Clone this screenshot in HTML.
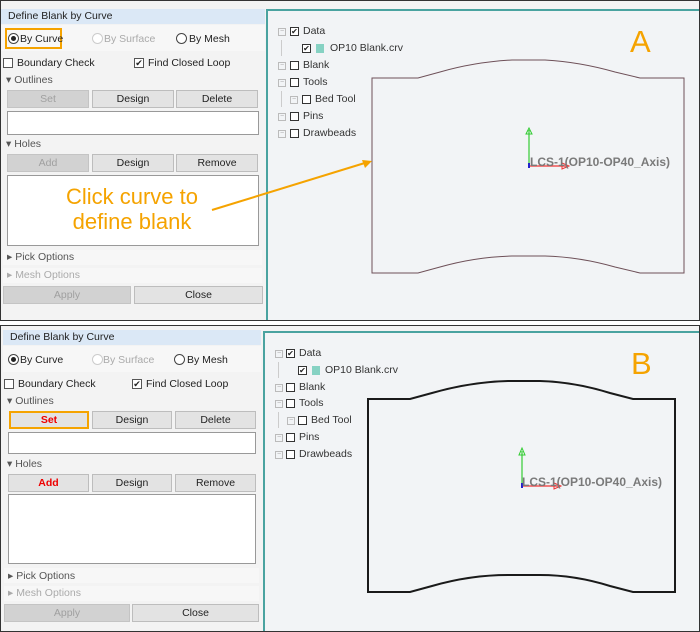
<!DOCTYPE html>
<html><head><style>
*{margin:0;padding:0;box-sizing:border-box}
body{width:700px;height:632px;background:#fff;position:relative;overflow:hidden;font-family:"Liberation Sans",sans-serif;font-size:10.5px;color:#222}
.a{position:absolute}
.panel{position:absolute;background:#f3f3f3;border:1px solid #333}
.hdr{position:absolute;background:#dbe8f6;font-size:10.5px;padding-left:7px;line-height:14px}
.btn{position:absolute;height:18px;background:#e3e3e3;border:1px solid #bdbdbd;text-align:center;line-height:16px;font-size:10.5px}
.dis{background:#d2d2d2;color:#a0a0a0;border-color:#c4c4c4}
.box{position:absolute;background:#fff;border:1px solid #999}
.rad{position:absolute;width:11px;height:11px;border:1px solid #444;border-radius:50%;background:#fff}
.chk{position:absolute;width:10px;height:10px;border:1px solid #555;background:#fff;font-size:9px;line-height:8px;text-align:center}
.sec{position:absolute;background:#f7f7f7}
.vp{position:absolute;background:#f2f4f6;border-left:2px solid #4aa3a0;border-top:2px solid #4aa3a0}
.tr{position:absolute;font-size:10.5px;color:#333}
.ex{position:absolute;width:8px;height:8px;border:1px solid #bbb;font-size:7px;line-height:6px;text-align:center;color:#aaa}
.tc{position:absolute;width:9px;height:9px;border:1px solid #333;background:#fff;font-size:8px;line-height:7px;text-align:center}
.lcs{position:absolute;font-size:12px;font-weight:bold;color:#7a7a7a;z-index:3}
</style></head><body>

<!-- TOP PANEL -->
<div class="panel" style="left:0;top:0;width:700px;height:321px"></div>
<div class="hdr" style="left:1px;top:9px;width:264px;height:15px">Define Blank by Curve</div>
<div class="sec" style="left:1px;top:25px;width:264px;height:26px"></div>
<div class="a" style="left:5px;top:28px;width:57px;height:21px;border:2px solid #f5a300"></div>
<div class="rad" style="left:8px;top:33px"></div><div class="a" style="left:11px;top:36px;width:5px;height:5px;border-radius:50%;background:#222"></div>
<div class="a" style="left:20px;top:33px">By Curve</div>
<div class="rad" style="left:92px;top:33px;border-color:#ccc"></div><div class="a" style="left:104px;top:33px;color:#aaa">By Surface</div>
<div class="rad" style="left:176px;top:33px"></div><div class="a" style="left:189px;top:33px">By Mesh</div>
<div class="chk" style="left:3px;top:58px"></div><div class="a" style="left:17px;top:57px">Boundary Check</div>
<div class="chk" style="left:134px;top:58px">✔</div><div class="a" style="left:148px;top:57px">Find Closed Loop</div>
<div class="a" style="left:6px;top:74px;color:#555">▾ Outlines</div>
<div class="btn dis" style="left:7px;top:90px;width:82px">Set</div>
<div class="btn" style="left:92px;top:90px;width:82px">Design</div>
<div class="btn" style="left:176px;top:90px;width:82px">Delete</div>
<div class="box" style="left:7px;top:111px;width:252px;height:24px"></div>
<div class="a" style="left:6px;top:138px;color:#555">▾ Holes</div>
<div class="btn dis" style="left:7px;top:154px;width:82px">Add</div>
<div class="btn" style="left:92px;top:154px;width:82px">Design</div>
<div class="btn" style="left:176px;top:154px;width:82px">Remove</div>
<div class="box" style="left:7px;top:175px;width:252px;height:71px"></div>
<div class="a" style="left:22px;top:184px;width:220px;text-align:center;color:#f5a300;font-size:22px;line-height:25px">Click curve to<br>define blank</div>
<div class="sec" style="left:3px;top:250px;width:259px;height:15px"></div>
<div class="a" style="left:7px;top:251px;color:#555">▸ Pick Options</div>
<div class="sec" style="left:3px;top:268px;width:259px;height:15px"></div>
<div class="a" style="left:7px;top:269px;color:#aaa">▸ Mesh Options</div>
<div class="btn dis" style="left:3px;top:286px;width:128px">Apply</div>
<div class="btn" style="left:134px;top:286px;width:129px">Close</div>

<div class="vp" style="left:266px;top:9px;width:433px;height:311px"></div>
<div class="ex" style="left:278px;top:28px">−</div><div class="tc" style="left:290px;top:27px">✔</div><div class="tr" style="left:303px;top:25px">Data</div>
<div class="a" style="left:281px;top:40px;width:1px;height:16px;background:#ccc"></div>
<div class="tc" style="left:302px;top:44px">✔</div><div class="a" style="left:316px;top:44px;width:8px;height:9px;background:#86d2c3"></div><div class="tr" style="left:330px;top:42px">OP10 Blank.crv</div>
<div class="ex" style="left:278px;top:62px">−</div><div class="tc" style="left:290px;top:61px"></div><div class="tr" style="left:303px;top:59px">Blank</div>
<div class="ex" style="left:278px;top:79px">−</div><div class="tc" style="left:290px;top:78px"></div><div class="tr" style="left:303px;top:76px">Tools</div>
<div class="a" style="left:281px;top:91px;width:1px;height:16px;background:#ccc"></div>
<div class="ex" style="left:290px;top:96px">−</div><div class="tc" style="left:302px;top:95px"></div><div class="tr" style="left:315px;top:93px">Bed Tool</div>
<div class="ex" style="left:278px;top:113px">−</div><div class="tc" style="left:290px;top:112px"></div><div class="tr" style="left:303px;top:110px">Pins</div>
<div class="ex" style="left:278px;top:130px">−</div><div class="tc" style="left:290px;top:129px"></div><div class="tr" style="left:303px;top:127px">Drawbeads</div>
<div class="a" style="left:630px;top:24px;color:#f5a300;font-size:31px">A</div>
<div class="lcs" style="left:530px;top:155px">LCS-1(OP10-OP40_Axis)</div>

<!-- BOTTOM PANEL -->
<div class="panel" style="left:0;top:325px;width:700px;height:307px"></div>
<div class="hdr" style="left:3px;top:330px;width:258px;height:15px">Define Blank by Curve</div>
<div class="sec" style="left:3px;top:346px;width:258px;height:26px"></div>
<div class="rad" style="left:8px;top:354px"></div><div class="a" style="left:11px;top:357px;width:5px;height:5px;border-radius:50%;background:#222"></div>
<div class="a" style="left:20px;top:354px">By Curve</div>
<div class="rad" style="left:92px;top:354px;border-color:#ccc"></div><div class="a" style="left:103px;top:354px;color:#aaa">By Surface</div>
<div class="rad" style="left:174px;top:354px"></div><div class="a" style="left:187px;top:354px">By Mesh</div>
<div class="chk" style="left:4px;top:379px"></div><div class="a" style="left:18px;top:378px">Boundary Check</div>
<div class="chk" style="left:132px;top:379px">✔</div><div class="a" style="left:146px;top:378px">Find Closed Loop</div>
<div class="a" style="left:7px;top:395px;color:#555">▾ Outlines</div>
<div class="btn" style="left:9px;top:411px;width:80px;color:#e00;font-weight:bold;border:2px solid #f5a300;line-height:14px">Set</div>
<div class="btn" style="left:92px;top:411px;width:80px">Design</div>
<div class="btn" style="left:175px;top:411px;width:81px">Delete</div>
<div class="box" style="left:8px;top:432px;width:248px;height:22px"></div>
<div class="a" style="left:7px;top:458px;color:#555">▾ Holes</div>
<div class="btn" style="left:8px;top:474px;width:81px;color:#e00;font-weight:bold">Add</div>
<div class="btn" style="left:92px;top:474px;width:80px">Design</div>
<div class="btn" style="left:175px;top:474px;width:81px">Remove</div>
<div class="box" style="left:8px;top:494px;width:248px;height:70px"></div>
<div class="sec" style="left:4px;top:568px;width:255px;height:15px"></div>
<div class="a" style="left:8px;top:570px;color:#555">▸ Pick Options</div>
<div class="sec" style="left:4px;top:586px;width:255px;height:15px"></div>
<div class="a" style="left:8px;top:587px;color:#aaa">▸ Mesh Options</div>
<div class="btn dis" style="left:4px;top:604px;width:126px">Apply</div>
<div class="btn" style="left:132px;top:604px;width:127px">Close</div>

<div class="vp" style="left:263px;top:331px;width:436px;height:300px"></div>
<div class="ex" style="left:275px;top:350px">−</div><div class="tc" style="left:286px;top:349px">✔</div><div class="tr" style="left:299px;top:347px">Data</div>
<div class="a" style="left:278px;top:362px;width:1px;height:16px;background:#ccc"></div>
<div class="tc" style="left:298px;top:366px">✔</div><div class="a" style="left:312px;top:366px;width:8px;height:9px;background:#86d2c3"></div><div class="tr" style="left:325px;top:364px">OP10 Blank.crv</div>
<div class="ex" style="left:275px;top:384px">−</div><div class="tc" style="left:286px;top:383px"></div><div class="tr" style="left:299px;top:381px">Blank</div>
<div class="ex" style="left:275px;top:400px">−</div><div class="tc" style="left:286px;top:399px"></div><div class="tr" style="left:299px;top:397px">Tools</div>
<div class="a" style="left:278px;top:412px;width:1px;height:16px;background:#ccc"></div>
<div class="ex" style="left:287px;top:417px">−</div><div class="tc" style="left:298px;top:416px"></div><div class="tr" style="left:311px;top:414px">Bed Tool</div>
<div class="ex" style="left:275px;top:434px">−</div><div class="tc" style="left:286px;top:433px"></div><div class="tr" style="left:299px;top:431px">Pins</div>
<div class="ex" style="left:275px;top:451px">−</div><div class="tc" style="left:286px;top:450px"></div><div class="tr" style="left:299px;top:448px">Drawbeads</div>
<div class="a" style="left:631px;top:346px;color:#f5a300;font-size:31px">B</div>
<div class="lcs" style="left:522px;top:475px">LCS-1(OP10-OP40_Axis)</div>

<svg class="a" style="left:0;top:0;z-index:2" width="700" height="632">
<path d="M372 78 H418 L440 72 Q475 62 512 60 H545 Q580 62 615 72 L640 78 H684 V273 H640 L615 267 Q580 257 545 256 H512 Q475 257 440 267 L418 273 H372 Z" fill="none" stroke="#6e5058" stroke-width="1"/>
<line x1="529" y1="166" x2="529" y2="130" stroke="#3c3" stroke-width="1.2"/><path d="M526 134 L529 128 L532 134 Z" fill="none" stroke="#3c3"/>
<line x1="529" y1="166" x2="566" y2="166" stroke="#e33" stroke-width="1.2"/><path d="M562 163 L569 166 L562 169 Z" fill="none" stroke="#e33"/>
<line x1="529" y1="163" x2="529" y2="168" stroke="#22c" stroke-width="2"/>
<line x1="212" y1="210" x2="368" y2="162" stroke="#f5a300" stroke-width="2"/><path d="M372 161 L362 160 L365 168 Z" fill="#f5a300"/>

<path d="M368 399 H410 L432 393 Q470 382 508 381 H540 Q575 382 610 393 L633 399 H675 V592 H633 L610 586 Q575 575 540 575 H508 Q470 575 432 586 L410 592 H368 Z" fill="none" stroke="#1a1a1a" stroke-width="2"/>
<line x1="522" y1="486" x2="522" y2="451" stroke="#3c3" stroke-width="1.2"/><path d="M519 455 L522 448 L525 455 Z" fill="none" stroke="#3c3"/>
<line x1="522" y1="486" x2="558" y2="486" stroke="#e33" stroke-width="1.2"/><path d="M554 483 L561 486 L554 489 Z" fill="none" stroke="#e33"/>
<line x1="522" y1="483" x2="522" y2="488" stroke="#22c" stroke-width="2"/>
</svg>
</body></html>
